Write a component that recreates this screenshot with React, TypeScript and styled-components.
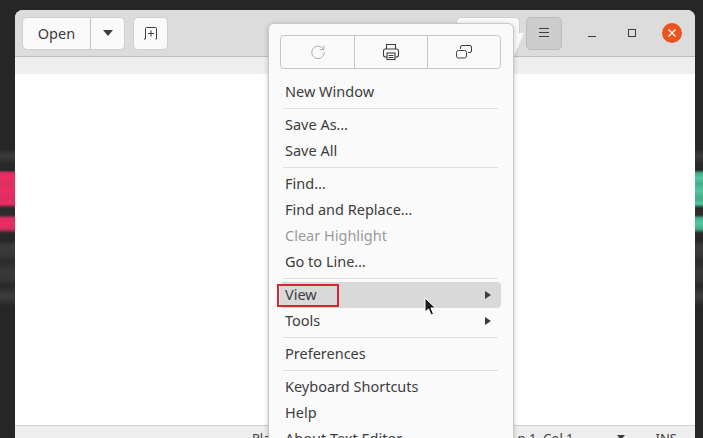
import React from "react";
import styled, { createGlobalStyle } from "styled-components";

const GlobalStyle = createGlobalStyle`
  html, body {
    margin: 0;
    padding: 0;
    width: 703px;
    height: 438px;
    overflow: hidden;
    background: #262626;
  }
  * {
    box-sizing: border-box;
  }
`;

const Desktop = styled.div`
  position: relative;
  width: 703px;
  height: 438px;
  padding: 10px 8px 0 15px;
  overflow: hidden;
  font-family: "Noto Sans", sans-serif;
  color: #3d3d3d;
  background: #262626;
`;

const Stripes = styled.div<{ $side: "left" | "right"; $hot: string; $soft: string }>`
  position: absolute;
  top: 150px;
  ${({ $side }) => ($side === "left" ? "left: 0; width: 15px;" : "right: 0; width: 8px;")}
  height: 160px;
  background: linear-gradient(
    180deg,
    #2b2b2b 0,
    #3a3a3a 6px,
    #2a2a2a 14px,
    #262626 20px,
    ${({ $soft }) => $soft} 23px,
    ${({ $hot }) => $hot} 28px,
    ${({ $soft }) => $soft} 34px,
    ${({ $hot }) => $hot} 40px,
    ${({ $soft }) => $soft} 48px,
    ${({ $hot }) => $hot} 54px,
    #2a2a2a 58px,
    #2c2c2c 65px,
    ${({ $soft }) => $soft} 68px,
    ${({ $hot }) => $hot} 73px,
    ${({ $soft }) => $soft} 79px,
    #2a2a2a 83px,
    #262626 90px,
    #3a3a3a 96px,
    #383838 104px,
    #2a2a2a 112px,
    #383838 120px,
    #383838 128px,
    #272727 136px,
    #3a3a3a 144px,
    #3a3a3a 148px,
    #272727 156px
  );
`;

const Window = styled.div`
  position: relative;
  display: flex;
  flex-direction: column;
  width: 680px;
  height: 428px;
  border-radius: 8px 8px 0 0;
  overflow: hidden;
  background: #fff;
`;

const HeaderBar = styled.div`
  display: flex;
  align-items: center;
  height: 47px;
  flex-shrink: 0;
  padding: 0 13px 0 7px;
  background: #dcdcdc;
  border-bottom: 1px solid #bdbdbd;
`;

const ToolButton = styled.button<{ $width: number; $active?: boolean }>`
  display: flex;
  align-items: center;
  justify-content: center;
  width: ${({ $width }) => $width}px;
  height: 33px;
  padding: 0;
  border: 1px solid ${({ $active }) => ($active ? "#bcbcbc" : "#cfcfcf")};
  border-radius: 5px;
  background: ${({ $active }) => ($active ? "#cdcdcd" : "#fafafa")};
  color: #3d3d3d;
`;

const SplitGroup = styled.div`
  display: flex;
  margin-right: 8px;
  height: 33px;
  border: 1px solid #cfcfcf;
  border-radius: 5px;
  background: #fafafa;
`;

const SplitPart = styled.div<{ $width: number; $divider?: boolean }>`
  display: flex;
  align-items: center;
  justify-content: center;
  width: ${({ $width }) => $width}px;
  padding-bottom: 1px;
  font-size: 14.5px;
  border-right: ${({ $divider }) => ($divider ? "1px solid #c4c4c4" : "none")};
`;

const Spacer = styled.div`
  flex: 1;
`;

const SaveGap = styled.div`
  width: 6px;
`;

const WindowControls = styled.div`
  display: flex;
  align-items: center;
  gap: 20px;
  margin-left: 20px;
`;

const ControlSlot = styled.div<{ $close?: boolean }>`
  display: flex;
  align-items: center;
  justify-content: center;
  width: 20px;
  height: 20px;
  border-radius: 50%;
  background: ${({ $close }) => ($close ? "#e95420" : "transparent")};
`;

const TabStrip = styled.div`
  height: 17px;
  flex-shrink: 0;
  background: #eeeeee;
`;

const Editor = styled.div`
  flex: 1;
  background: #fff;
`;

const StatusBar = styled.div`
  display: flex;
  align-items: flex-start;
  height: 13px;
  flex-shrink: 0;
  padding: 3px 18px 0 0;
  background: #eeeeee;
  border-top: 1px solid #cfcfcf;
  font-size: 13px;
  line-height: 18px;
  white-space: nowrap;
`;

const PlainText = styled.span`
  margin-left: 237px;
`;

const Position = styled.span`
  margin-left: auto;
`;

const StatusArrow = styled.span`
  width: 0;
  height: 0;
  margin: 6px 31px 0 43px;
  border-left: 4px solid transparent;
  border-right: 4px solid transparent;
  border-top: 5px solid #3d3d3d;
`;

const Popover = styled.div`
  position: absolute;
  top: 13px;
  left: 253px;
  width: 246px;
  height: 440px;
  padding: 11px 12px 0 11px;
  background: #fafafa;
  border: 1px solid #c8c8c8;
  border-radius: 6px;
  box-shadow: 0 1px 5px rgba(0, 0, 0, 0.22);
`;

const PopoverArrow = styled.div`
  position: absolute;
  top: 23px;
  left: 498px;
  width: 11px;
  height: 25px;
  background: #fafafa;
  clip-path: polygon(0 0, 100% 0, 0 100%);
`;

const IconRow = styled.div`
  display: flex;
  height: 34px;
  margin-bottom: 10px;
  border: 1px solid #c8c8c8;
  border-radius: 4px;
`;

const IconCell = styled.div<{ $wide?: boolean; $last?: boolean }>`
  flex: ${({ $wide }) => ($wide ? "0 0 74px" : "1")};
  display: flex;
  align-items: center;
  justify-content: center;
  border-right: ${({ $last }) => ($last ? "none" : "1px solid #c8c8c8")};
`;

const MenuItem = styled.div<{ $hover?: boolean; $disabled?: boolean }>`
  position: relative;
  display: flex;
  align-items: center;
  justify-content: space-between;
  height: 26px;
  padding: 0 5px 2px;
  border-radius: 4px;
  font-size: 14.5px;
  color: ${({ $disabled }) => ($disabled ? "#9a9a9a" : "#3d3d3d")};
  background: ${({ $hover }) => ($hover ? "#d9d9d9" : "transparent")};
`;

const Separator = styled.div`
  height: 1px;
  margin: 3px 3px;
  background: #dedede;
`;

const SubArrow = styled.span`
  width: 0;
  height: 0;
  margin: 2px 5px 0 0;
  border-top: 4px solid transparent;
  border-bottom: 4px solid transparent;
  border-left: 6px solid #3d3d3d;
`;

const Highlight = styled.div`
  position: absolute;
  top: 2px;
  left: -3px;
  width: 62px;
  height: 23px;
  border: 2px solid #d9262c;
`;

const Cursor = styled.svg`
  position: absolute;
  top: 15px;
  left: 144px;
`;

const IconOpenTab = () => (
  <svg width="16" height="14" viewBox="0 0 16 14" fill="none" stroke="#3d3d3d" strokeWidth="1">
    <path d="M1 13h1.500V2.500a1 1 0 0 1 1-1h9a1 1 0 0 1 1 1V13h-1" />
    <path d="M8 4.500v6M5 7.500h6" />
  </svg>
);

const IconCaret = () => (
  <svg width="10" height="6" viewBox="0 0 10 6">
    <path d="M0 0h10L5 6z" fill="#3d3d3d" />
  </svg>
);

const IconMenu = () => (
  <svg width="12" height="12" viewBox="0 0 12 12" stroke="#3d3d3d" strokeWidth="1">
    <path d="M1 1.500h10M1 5.500h10M1 9.500h10" />
  </svg>
);

const IconMinimize = () => (
  <svg width="10" height="10" viewBox="0 0 10 10" stroke="#3d3d3d" strokeWidth="1">
    <path d="M1 8.500h8" />
  </svg>
);

const IconMaximize = () => (
  <svg width="10" height="10" viewBox="0 0 10 10" fill="none" stroke="#3d3d3d" strokeWidth="1">
    <rect x="1.500" y="1.500" width="7" height="7" />
  </svg>
);

const IconClose = () => (
  <svg width="10" height="10" viewBox="0 0 10 10" stroke="#fff" strokeWidth="1.300">
    <path d="M1.500 1.500l7 7M8.500 1.500l-7 7" />
  </svg>
);

const IconReload = () => (
  <svg width="16" height="16" viewBox="0 0 16 16" fill="none" stroke="#a8a8a8" strokeWidth="1">
    <path d="M13.500 5.500A6.200 6.200 0 1 0 14.200 8" />
    <path d="M14 1.500v4.200H9.800" />
  </svg>
);

const IconPrint = () => (
  <svg width="18" height="18" viewBox="0 0 18 18" fill="none" stroke="#3d3d3d" strokeWidth="1.100">
    <path d="M4.500 6V1.500h9V6" />
    <rect x="1.500" y="6" width="15" height="8" rx="2" />
    <rect x="5" y="10" width="8" height="6.500" fill="#fafafa" />
    <path d="M6.500 12.500h5M6.500 14.500h5" />
  </svg>
);

const IconFullscreen = () => (
  <svg width="18" height="16" viewBox="0 0 18 16" fill="none" stroke="#3d3d3d" strokeWidth="1">
    <path d="M5.500 5V3A1.500 1.500 0 0 1 7 1.500h8A1.500 1.500 0 0 1 16.500 3v4A1.500 1.500 0 0 1 15 8.500h-2" />
    <rect x="1.500" y="6.500" width="10" height="7.500" rx="2" />
  </svg>
);

const App = () => (
  <Desktop>
    <GlobalStyle />
    <Stripes $side="left" $hot="#ee2c62" $soft="#d92f60" />
    <Stripes $side="right" $hot="#52c8a0" $soft="#44ab89" />
    <Window>
      <HeaderBar>
        <SplitGroup>
          <SplitPart $width={68} $divider>Open</SplitPart>
          <SplitPart $width={33}><IconCaret /></SplitPart>
        </SplitGroup>
        <ToolButton $width={35}><IconOpenTab /></ToolButton>
        <Spacer />
        <ToolButton $width={64} />
        <SaveGap />
        <ToolButton $width={36} $active><IconMenu /></ToolButton>
        <WindowControls>
          <ControlSlot><IconMinimize /></ControlSlot>
          <ControlSlot><IconMaximize /></ControlSlot>
          <ControlSlot $close><IconClose /></ControlSlot>
        </WindowControls>
      </HeaderBar>
      <TabStrip />
      <Editor />
      <StatusBar>
        <PlainText>Plain Text</PlainText>
        <Position>Ln 1, Col 1</Position>
        <StatusArrow />
        <span>INS</span>
      </StatusBar>
      <PopoverArrow />
      <Popover>
        <IconRow>
          <IconCell $wide><IconReload /></IconCell>
          <IconCell><IconPrint /></IconCell>
          <IconCell $last><IconFullscreen /></IconCell>
        </IconRow>
        <MenuItem>New Window</MenuItem>
        <Separator />
        <MenuItem>Save As…</MenuItem>
        <MenuItem>Save All</MenuItem>
        <Separator />
        <MenuItem>Find…</MenuItem>
        <MenuItem>Find and Replace…</MenuItem>
        <MenuItem $disabled>Clear Highlight</MenuItem>
        <MenuItem>Go to Line…</MenuItem>
        <Separator />
        <MenuItem $hover>
          View
          <SubArrow />
          <Highlight />
          <Cursor width="14" height="20" viewBox="0 0 14 20">
            <path d="M1 1v14l3.500-3 2.500 6 2.500-1-2.500-6h4.500z" fill="#1c1c1c" stroke="#fff" strokeWidth="1" />
          </Cursor>
        </MenuItem>
        <MenuItem>
          Tools
          <SubArrow />
        </MenuItem>
        <Separator />
        <MenuItem>Preferences</MenuItem>
        <Separator />
        <MenuItem>Keyboard Shortcuts</MenuItem>
        <MenuItem>Help</MenuItem>
        <MenuItem>About Text Editor</MenuItem>
      </Popover>
    </Window>
  </Desktop>
);

export default App;
